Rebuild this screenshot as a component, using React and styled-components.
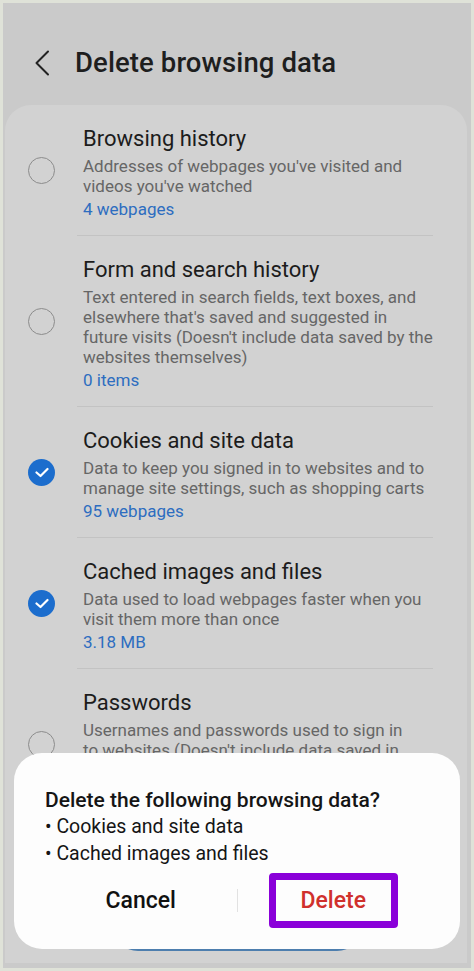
import React from 'react';
import styled, { createGlobalStyle } from 'styled-components';

const GlobalStyle = createGlobalStyle`
    html, body {
        margin: 0;
        padding: 0;
        background: #cacaca;
        overflow: hidden;
    }
    body {
        font-family: Roboto, "Liberation Sans", Arial, sans-serif;
    }
`;

const Screen = styled.div`
    position: relative;
    box-sizing: border-box;
    width: 474px;
    height: 971px;
    border: 3px solid #dfe2d8;
    background: #cacaca;
    display: flex;
    flex-direction: column;
    overflow: hidden;
`;

const Header = styled.div`
    display: flex;
    align-items: center;
    gap: 25px;
    padding: 44px 0 26px 31px;
`;

const BackButton = styled.span`
    display: flex;
    width: 16px;
    height: 32px;
    align-items: center;
`;

const Title = styled.h1`
    margin: 0;
    font-size: 27.5px;
    line-height: 32px;
    font-weight: 500;
    color: #1e1e1e;
    letter-spacing: 0.1px;
`;

const Card = styled.div`
    flex: 1;
    margin: 0 4px 0 2px;
    background: #d2d2d2;
    border-radius: 26px 26px 0 0;
    overflow: hidden;
`;

const Row = styled.div`
    display: flex;
    align-items: center;
    gap: 28px;
    padding-left: 23px;
    padding-right: 14px;
`;

const Radio = styled.span`
    flex: none;
    box-sizing: border-box;
    width: 27px;
    height: 27px;
    border-radius: 50%;
    border: ${p => (p.checked ? 'none' : '1.6px solid #8c8c8c')};
    background: ${p => (p.checked ? '#1c6dcd' : 'transparent')};
    display: flex;
    align-items: center;
    justify-content: center;
`;

const Body = styled.div`
    flex: 1;
    padding: 20px 0 16px;
`;

const ItemTitle = styled.div`
    font-size: 22px;
    line-height: 28px;
    color: #1c1c1c;
`;

const Desc = styled.div`
    margin-top: 3px;
    font-size: 17px;
    line-height: 20px;
    color: #666666;
    white-space: nowrap;
`;

const DescLine = styled.span`
    display: block;
`;

const Count = styled.div`
    margin-top: 3px;
    font-size: 17px;
    line-height: 20px;
    color: #2d6dc0;
`;

const Divider = styled.div`
    height: 1px;
    margin: 0 34px 0 72px;
    background: #c3c3c3;
`;

const BottomBar = styled.div`
    display: flex;
    justify-content: center;
    padding: 0 0 17px;
    margin-top: -60px;
`;

const PrimaryButton = styled.div`
    width: 247px;
    height: 48px;
    border-radius: 24px;
    background: #4d7eae;
`;

const Dialog = styled.div`
    position: absolute;
    left: 11px;
    right: 11px;
    bottom: 19px;
    box-sizing: border-box;
    height: 196px;
    padding: 34px 31px 0;
    background: #fdfdfd;
    border-radius: 28px;
`;

const DialogTitle = styled.div`
    font-size: 21px;
    line-height: 26px;
    font-weight: 500;
    color: #151515;
`;

const Bullet = styled.div`
    font-size: 19.5px;
    line-height: 27px;
    color: #151515;
`;

const Actions = styled.div`
    display: flex;
    align-items: center;
    height: 56px;
    margin-top: 5px;
`;

const Action = styled.div`
    flex: 1;
    display: flex;
    align-items: center;
    justify-content: center;
    font-size: 23px;
    font-weight: 500;
    color: ${p => (p.danger ? '#d0302c' : '#111111')};
`;

const ActionDivider = styled.div`
    width: 1px;
    height: 23px;
    background: #e2e2e2;
`;

const Highlight = styled.span`
    box-sizing: border-box;
    display: flex;
    align-items: center;
    justify-content: center;
    width: 129px;
    height: 55px;
    border: 7px solid #8a00d9;
    border-radius: 4px;
`;

const items = [
    {
        title: 'Browsing history',
        desc: ["Addresses of webpages you've visited and", "videos you've watched"],
        count: '4 webpages',
        checked: false,
    },
    {
        title: 'Form and search history',
        desc: [
            'Text entered in search fields, text boxes, and',
            "elsewhere that's saved and suggested in",
            "future visits (Doesn't include data saved by the",
            'websites themselves)',
        ],
        count: '0 items',
        checked: false,
    },
    {
        title: 'Cookies and site data',
        desc: ['Data to keep you signed in to websites and to', 'manage site settings, such as shopping carts'],
        count: '95 webpages',
        checked: true,
    },
    {
        title: 'Cached images and files',
        desc: ['Data used to load webpages faster when you', 'visit them more than once'],
        count: '3.18 MB',
        checked: true,
    },
    {
        title: 'Passwords',
        desc: [
            'Usernames and passwords used to sign in',
            "to websites (Doesn't include data saved in",
            'your Samsung Pass)',
        ],
        count: '0 passwords',
        checked: false,
    },
];

const Check = () => (
    <svg width="14" height="11" viewBox="0 0 14 11">
        <polyline points="1.5,5.5 5.5,9 12.5,2" fill="none" stroke="#ffffff" strokeWidth="2.2" strokeLinecap="round" strokeLinejoin="round" />
    </svg>
);

const App = () => {
    return (
        <Screen>
            <GlobalStyle />
            <Header>
                <BackButton>
                    <svg width="16" height="26" viewBox="0 0 16 26">
                        <polyline points="14,1.5 2.5,13 14,24.5" fill="none" stroke="#222222" strokeWidth="2" strokeLinecap="round" strokeLinejoin="round" />
                    </svg>
                </BackButton>
                <Title>Delete browsing data</Title>
            </Header>
            <Card>
                {items.map((item, i) => (
                    <React.Fragment key={item.title}>
                        {i > 0 && <Divider />}
                        <Row>
                            <Radio checked={item.checked}>{item.checked && <Check />}</Radio>
                            <Body>
                                <ItemTitle>{item.title}</ItemTitle>
                                <Desc>
                                    {item.desc.map(line => (
                                        <DescLine key={line}>{line}</DescLine>
                                    ))}
                                </Desc>
                                <Count>{item.count}</Count>
                            </Body>
                        </Row>
                    </React.Fragment>
                ))}
            </Card>
            <BottomBar>
                <PrimaryButton />
            </BottomBar>
            <Dialog>
                <DialogTitle>Delete the following browsing data?</DialogTitle>
                <Bullet>• Cookies and site data</Bullet>
                <Bullet>• Cached images and files</Bullet>
                <Actions>
                    <Action>Cancel</Action>
                    <ActionDivider />
                    <Action danger>
                        <Highlight>Delete</Highlight>
                    </Action>
                </Actions>
            </Dialog>
        </Screen>
    );
};

export default App;
